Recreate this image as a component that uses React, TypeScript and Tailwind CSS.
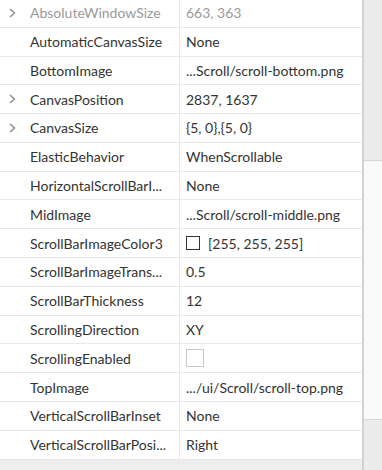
import React from 'react';

type Row = {
    name: string;
    value?: string;
    expand?: boolean;
    readOnly?: boolean;
    kind?: 'text' | 'color' | 'bool';
};

const ROWS: Row[] = [
    { name: 'AbsoluteWindowSize', value: '663, 363', expand: true, readOnly: true },
    { name: 'AutomaticCanvasSize', value: 'None' },
    { name: 'BottomImage', value: '...Scroll/scroll-bottom.png' },
    { name: 'CanvasPosition', value: '2837, 1637', expand: true },
    { name: 'CanvasSize', value: '{5, 0},{5, 0}', expand: true },
    { name: 'ElasticBehavior', value: 'WhenScrollable' },
    { name: 'HorizontalScrollBarI...', value: 'None' },
    { name: 'MidImage', value: '...Scroll/scroll-middle.png' },
    { name: 'ScrollBarImageColor3', value: '[255, 255, 255]', kind: 'color' },
    { name: 'ScrollBarImageTrans...', value: '0.5' },
    { name: 'ScrollBarThickness', value: '12' },
    { name: 'ScrollingDirection', value: 'XY' },
    { name: 'ScrollingEnabled', kind: 'bool' },
    { name: 'TopImage', value: '.../ui/Scroll/scroll-top.png' },
    { name: 'VerticalScrollBarInset', value: 'None' },
    { name: 'VerticalScrollBarPosi...', value: 'Right' },
];

const Chevron = () => (
    <svg width="7" height="10" viewBox="0 0 7 10" className="text-[#8a8a8a]">
        <path d="M1 1l4.5 4L1 9" fill="none" stroke="currentColor" strokeWidth="1.4" />
    </svg>
);

const App: React.FC = () => {
    return (
        <div
            className="w-[382px] h-[470px] overflow-hidden bg-white flex text-[14px] text-[#333333]"
            style={{ fontFamily: 'Lato, "Noto Sans", sans-serif' }}
        >
            <div className="w-[362px] flex flex-col">
                <div className="-mt-[1.1px]">
                    {ROWS.map((row) => (
                        <div key={row.name} className="h-[28.8px] flex border-b border-[#e8e8e8]">
                            <div className="w-[180px] flex items-center border-r border-[#e8e8e8]">
                                <div className="w-[30px] pl-[9px] flex items-center">
                                    {row.expand && <Chevron />}
                                </div>
                                <span className={`whitespace-nowrap ${row.readOnly ? 'text-[#9a9a9a]' : ''}`}>
                                    {row.name}
                                </span>
                            </div>
                            <div className="flex-1 flex items-center pl-[6px] whitespace-nowrap">
                                {row.kind === 'color' && (
                                    <>
                                        <span className="w-[14px] h-[14px] border border-[#333333] bg-white mr-[8px]" />
                                        <span>{row.value}</span>
                                    </>
                                )}
                                {row.kind === 'bool' && (
                                    <span className="w-[18px] h-[18px] border border-[#c8c8c8] bg-white" />
                                )}
                                {(!row.kind || row.kind === 'text') && (
                                    <span className={row.readOnly ? 'text-[#9a9a9a]' : ''}>{row.value}</span>
                                )}
                            </div>
                        </div>
                    ))}
                </div>
                <div className="flex-1 bg-[#eeeeee]" />
            </div>
            <div className="w-[2px] bg-[#d2d2d2]" />
            <div className="flex-1 flex flex-col">
                <div className="h-[161px] bg-[#ececec] border-b border-[#d6d6d6]" />
                <div className="h-[258px] bg-[#fafafa]" />
                <div className="flex-1 bg-[#ececec] border-t border-[#d6d6d6]" />
            </div>
        </div>
    );
};

export default App;
